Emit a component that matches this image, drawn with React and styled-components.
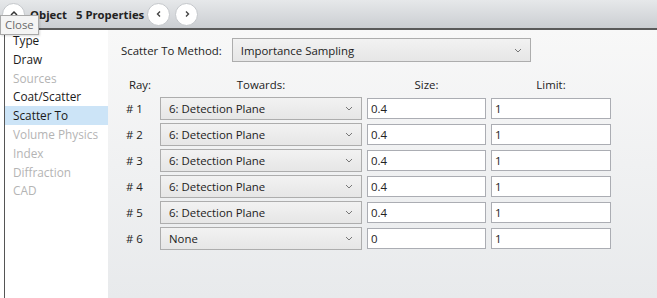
import React from "react";
import styled, { createGlobalStyle } from "styled-components";

const GlobalStyle = createGlobalStyle`
  html, body {
    margin: 0;
    padding: 0;
    background: #fff;
  }
  body {
    font-family: "Open Sans", "Noto Sans", sans-serif;
    font-size: 11.4px;
    color: #222;
  }
`;

const Window = styled.div`
  width: 657px;
  height: 298px;
  display: flex;
  flex-direction: column;
  overflow: hidden;
  position: relative;
`;

const TitleBar = styled.div`
  height: 28px;
  display: flex;
  align-items: center;
  gap: 5px;
  padding-left: 2px;
  background: linear-gradient(#e6e8ea, #cbced2);
  border-bottom: 2px solid #5a5a5a;
  flex-shrink: 0;
`;

const RoundButton = styled.div`
  width: 21px;
  height: 21px;
  border-radius: 50%;
  background: #fff;
  border: 1px solid #c4c7cb;
  display: flex;
  align-items: center;
  justify-content: center;
  flex-shrink: 0;
`;

const Title = styled.div`
  font-weight: 700;
  font-size: 11.3px;
  color: #222;
  margin-right: ${(p) => p.$gap || 0}px;
`;

const Tooltip = styled.div`
  position: absolute;
  left: 0;
  top: 15px;
  padding: 1px 4px 2px;
  background: #f4f4f4;
  border: 1px solid #a9a9a9;
  color: #6a6a6a;
  font-size: 11.4px;
  box-shadow: 1px 1px 2px rgba(0, 0, 0, 0.15);
`;

const Body = styled.div`
  flex: 1;
  display: flex;
`;

const SideBar = styled.div`
  width: 103px;
  margin-left: 4px;
  border-left: 1px solid #555;
  background: #fff;
  padding-top: 1px;
  display: flex;
  flex-direction: column;
`;

const NavItem = styled.div`
  height: 18.8px;
  line-height: 18.8px;
  padding-left: 8px;
  font-size: 11.8px;
  color: ${(p) => (p.$disabled ? "#b4b4b4" : "#1a1a1a")};
  background: ${(p) => (p.$active ? "#cce4f7" : "transparent")};
`;

const Content = styled.div`
  flex: 1;
  background: linear-gradient(#f8f8f8, #e8eaec);
  padding: 8px 0 0 13px;
`;

const MethodRow = styled.div`
  display: flex;
  align-items: center;
  gap: 10px;
  height: 24px;
`;

const Label = styled.div`
  color: #222;
`;

const SelectBox = styled.div`
  width: ${(p) => p.$w}px;
  height: ${(p) => p.$h || 22}px;
  box-sizing: border-box;
  border: 1px solid #adadad;
  background: linear-gradient(#f2f2f2, #e6e6e6);
  display: flex;
  align-items: center;
  justify-content: space-between;
  padding: 0 8px 0 8px;
  color: #222;
  flex-shrink: 0;
`;

const Chevron = () => (
  <svg width="8" height="5" viewBox="0 0 8 5">
    <path d="M1 1 L4 4 L7 1" fill="none" stroke="#777" strokeWidth="1" />
  </svg>
);

const Grid = styled.div`
  display: grid;
  grid-template-columns: 34px 202px 119px 120px;
  column-gap: 5px;
  row-gap: 3px;
  align-items: center;
  margin-top: 13px;
`;

const HeadCell = styled.div`
  color: #222;
  text-align: ${(p) => p.$align || "center"};
  padding-left: ${(p) => p.$pl || 0}px;
  height: 19px;
  line-height: 19px;
`;

const RayLabel = styled.div`
  color: #222;
  padding-left: 5px;
`;

const TextBox = styled.div`
  height: 21px;
  box-sizing: border-box;
  border: 1px solid #abadb3;
  background: #fff;
  padding-left: 3px;
  line-height: 19px;
  color: #222;
`;

const navItems = [
  { name: "Type" },
  { name: "Draw" },
  { name: "Sources", disabled: true },
  { name: "Coat/Scatter" },
  { name: "Scatter To", active: true },
  { name: "Volume Physics", disabled: true },
  { name: "Index", disabled: true },
  { name: "Diffraction", disabled: true },
  { name: "CAD", disabled: true },
];

const rays = [
  { target: "6: Detection Plane", size: "0.4", limit: "1" },
  { target: "6: Detection Plane", size: "0.4", limit: "1" },
  { target: "6: Detection Plane", size: "0.4", limit: "1" },
  { target: "6: Detection Plane", size: "0.4", limit: "1" },
  { target: "6: Detection Plane", size: "0.4", limit: "1" },
  { target: "None", size: "0", limit: "1" },
];

export default function App() {
  return (
    <Window>
      <GlobalStyle />
      <TitleBar>
        <RoundButton>
          <svg width="8" height="8" viewBox="0 0 8 8">
            <path d="M1 5 L4 2 L7 5" fill="none" stroke="#333" strokeWidth="1.5" />
          </svg>
        </RoundButton>
        <Title $gap={4}>Object</Title>
        <Title $gap={-2}>5 Properties</Title>
        <RoundButton>
          <svg width="8" height="8" viewBox="0 0 8 8">
            <path d="M5 1.5 L2.5 4 L5 6.5" fill="none" stroke="#444" strokeWidth="1.4" />
          </svg>
        </RoundButton>
        <RoundButton>
          <svg width="8" height="8" viewBox="0 0 8 8">
            <path d="M3 1.5 L5.5 4 L3 6.5" fill="none" stroke="#444" strokeWidth="1.4" />
          </svg>
        </RoundButton>
      </TitleBar>
      <Tooltip>Close</Tooltip>
      <Body>
        <SideBar>
          {navItems.map((item) => (
            <NavItem key={item.name} $disabled={item.disabled} $active={item.active}>
              {item.name}
            </NavItem>
          ))}
        </SideBar>
        <Content>
          <MethodRow>
            <Label>Scatter To Method:</Label>
            <SelectBox $w={299} $h={24}>
              Importance Sampling
              <Chevron />
            </SelectBox>
          </MethodRow>
          <Grid>
            <HeadCell $align="left" $pl={8}>Ray:</HeadCell>
            <HeadCell>Towards:</HeadCell>
            <HeadCell>Size:</HeadCell>
            <HeadCell>Limit:</HeadCell>
            {rays.map((ray, i) => (
              <React.Fragment key={i}>
                <RayLabel># {i + 1}</RayLabel>
                <SelectBox $w={202} $h={23}>
                  {ray.target}
                  <Chevron />
                </SelectBox>
                <TextBox>{ray.size}</TextBox>
                <TextBox>{ray.limit}</TextBox>
              </React.Fragment>
            ))}
          </Grid>
        </Content>
      </Body>
    </Window>
  );
}
